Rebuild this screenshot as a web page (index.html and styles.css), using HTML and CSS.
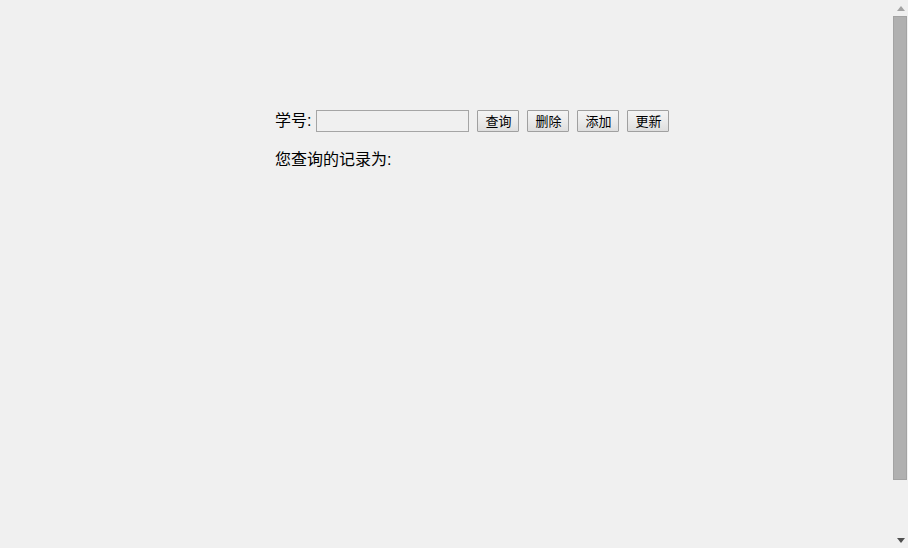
FILE: index.html
```html
<!DOCTYPE html>
<html lang="zh-CN">
<head>
<meta charset="utf-8">
<title>学生记录查询</title>
<link rel="stylesheet" href="styles.css">
</head>
<body>
<main class="page">
  <form class="query-row">
    <label class="label" for="sno">学号:</label>
    <input class="field" id="sno" type="text">
    <button class="btn" type="button">查询</button>
    <button class="btn" type="button">删除</button>
    <button class="btn" type="button">添加</button>
    <button class="btn" type="button">更新</button>
  </form>
  <p class="result">您查询的记录为:</p>
</main>
<div class="scrollbar" aria-hidden="true">
  <div class="sb-btn">
    <svg width="8" height="5" viewBox="0 0 8 5"><path d="M0 5 L4 0 L8 5 Z" fill="#a3a3a3"/></svg>
  </div>
  <div class="sb-track">
    <div class="sb-thumb"></div>
  </div>
  <div class="sb-btn">
    <svg width="8" height="5" viewBox="0 0 8 5"><path d="M0 0 L8 0 L4 5 Z" fill="#505050"/></svg>
  </div>
</div>
</body>
</html>
```
FILE: styles.css
```css
html {
  background: #f0f0f0;
}
body {
  margin: 0;
  font-family: "Liberation Sans", "Noto Sans CJK SC", sans-serif;
  color: #000;
}
.page {
  padding: 110px 0 0 275px;
}
.query-row {
  display: flex;
  align-items: center;
  margin: 0;
  height: 22px;
}
.label {
  font-size: 16px;
  line-height: 22px;
  margin-right: 5px;
}
.field {
  box-sizing: border-box;
  width: 153px;
  height: 22px;
  margin: 0 8px 0 0;
  border: 1px solid #a5a5a5;
  background: #f0f0f0;
  padding: 0 3px;
  font-size: 13px;
}
.btn {
  box-sizing: border-box;
  width: 42px;
  height: 22px;
  margin: 0 8px 0 0;
  padding: 0;
  border: 1px solid #a0a0a0;
  border-radius: 1px;
  background: linear-gradient(#f4f4f4, #ebebeb 50%, #dedede);
  font-family: "Noto Sans CJK SC", sans-serif;
  font-size: 13px;
  line-height: 20px;
  color: #000;
}
.result {
  margin: 18px 0 0;
  font-size: 16px;
  line-height: 20px;
}
.scrollbar {
  position: fixed;
  top: 0;
  right: 0;
  width: 15px;
  height: 100%;
  display: flex;
  flex-direction: column;
  background: #f0f0f0;
}
.sb-btn {
  height: 16px;
  display: flex;
  align-items: center;
  justify-content: center;
}
.sb-btn svg {
  display: block;
}
.sb-track {
  flex: 1;
  padding: 0 1px 0 0;
}
.sb-thumb {
  box-sizing: border-box;
  width: 14px;
  height: 464px;
  background: #b0b0b0;
  border: 1px solid #a3a3a3;
}
```
